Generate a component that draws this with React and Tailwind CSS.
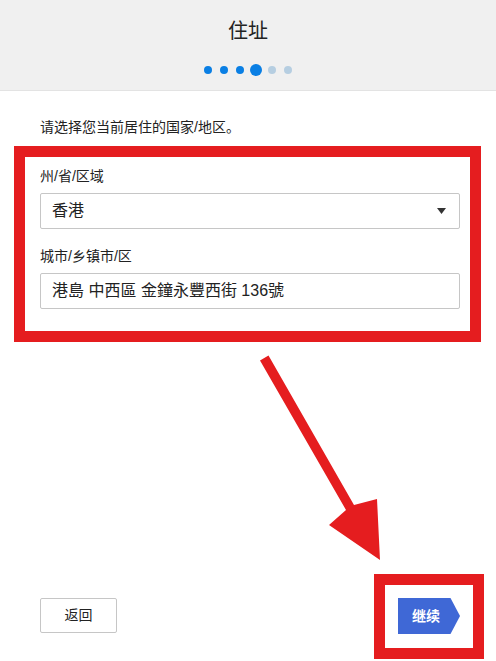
import React from "react";

const font = { fontFamily: '"Liberation Sans", "Noto Sans CJK SC", sans-serif' };

export default function App() {
  return (
    <div className="relative w-[496px] h-[661px] bg-white flex flex-col overflow-hidden text-[#222]" style={font}>
      <header className="h-[91px] shrink-0 bg-[#f0f0f0] border-b border-[#e3e3e3] flex flex-col items-center">
        <h1 className="mt-[17px] text-[20px] leading-[28px] font-normal text-[#222]">住址</h1>
        <div className="mt-[19px] flex items-center gap-2">
          <span className="w-2 h-2 rounded-full bg-[#0a7fe4]" />
          <span className="w-2 h-2 rounded-full bg-[#0a7fe4]" />
          <span className="w-2 h-2 rounded-full bg-[#0a7fe4]" />
          <span className="w-3 h-3 rounded-full bg-[#0a7fe4] -mx-[2px]" />
          <span className="w-2 h-2 rounded-full bg-[#b6cee1]" />
          <span className="w-2 h-2 rounded-full bg-[#b6cee1]" />
        </div>
      </header>

      <main className="flex-1 px-[40px]">
        <p className="mt-[26px] text-[14px] leading-[20px]">请选择您当前居住的国家/地区。</p>
        <div className="mt-[29px]">
          <label className="block text-[14px] leading-[20px]">州/省/区域</label>
          <div className="mt-[7px] h-[36px] w-[420px] border border-[#c6c6c6] rounded-[2px] flex items-center justify-between pl-[11px] pr-[13px] text-[16px]">
            <span>香港</span>
            <svg width="9" height="6" viewBox="0 0 9 6"><path d="M0 0H9L4.5 6Z" fill="#333" /></svg>
          </div>
          <label className="block mt-[17px] text-[14px] leading-[20px]">城市/乡镇市/区</label>
          <div className="mt-[7px] h-[36px] w-[420px] border border-[#c6c6c6] rounded-[2px] flex items-center pl-[11px] text-[16px]">
            港島 中西區 金鐘永豐西街 136號
          </div>
        </div>
      </main>

      <footer className="h-[63px] shrink-0 pl-[40px] pr-[36px] flex items-start justify-between">
        <button className="w-[77px] h-[35px] border border-[#c6c6c6] rounded-[2px] bg-white text-[14px] text-[#222]">返回</button>
        <div className="flex items-stretch h-[36px]">
          <div className="w-[52px] bg-[#3f68d6] text-white text-[14px] font-bold flex items-center justify-center pl-[4px]">继续</div>
          <svg width="10" height="36" viewBox="0 0 10 36" className="block"><path d="M0 0H0.5L10 18L0.5 36H0Z" fill="#3f68d6" /></svg>
        </div>
      </footer>

      {/* annotations */}
      <div className="absolute left-[14px] top-[146px] w-[467px] h-[196px] border-[11px] border-[#e51d1f] pointer-events-none" />
      <div className="absolute left-[374px] top-[574px] w-[110px] h-[85px] border-[11px] border-[#e51d1f] pointer-events-none" />
      <svg className="absolute left-0 top-0 pointer-events-none" width="496" height="661" viewBox="0 0 496 661">
        <path d="M260 360.5 L268.5 355.5 L354 505 L377 499 L380 560 L329 525 L346 510 Z" fill="#e51d1f" />
      </svg>
    </div>
  );
}
